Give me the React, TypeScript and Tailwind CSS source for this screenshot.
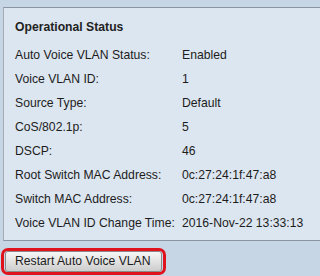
import React from 'react';

const rows: [string, string][] = [
  ['Auto Voice VLAN Status:', 'Enabled'],
  ['Voice VLAN ID:', '1'],
  ['Source Type:', 'Default'],
  ['CoS/802.1p:', '5'],
  ['DSCP:', '46'],
  ['Root Switch MAC Address:', '0c:27:24:1f:47:a8'],
  ['Switch MAC Address:', '0c:27:24:1f:47:a8'],
  ['Voice VLAN ID Change Time:', '2016-Nov-22 13:33:13'],
];

const App = () => {
  return (
    <div className="w-[320px] h-[276px] overflow-hidden bg-[#c7d6e5] pt-[7px] text-[12.2px] text-[#1c1c1c] font-['Liberation_Sans',Arial,sans-serif]">
      {/* Operational Status panel */}
      <div className="ml-[3px] border-t border-l border-b border-t-[#8a95a1] border-l-[#a3adb8] border-b-[#8a95a1] bg-[#dce6f0] pl-[11px] pt-[7px] pb-[5px]">
        <div className="h-[24px] leading-[24px] font-bold text-[#222]">Operational Status</div>
        <div className="mt-[4px] grid grid-cols-[167px_1fr]">
          {rows.map(([label, value], index) => (
            <React.Fragment key={index}>
              <div className="h-[24px] leading-[24px] whitespace-nowrap">{label}</div>
              <div className="h-[24px] leading-[24px] whitespace-nowrap">{value}</div>
            </React.Fragment>
          ))}
        </div>
      </div>

      {/* Restart button, outlined in red */}
      <div className="mt-[7px] ml-[1px] w-[165px] h-[27px] border-[3px] border-[#e0121c] rounded-[7px] flex items-center justify-center">
        <button className="w-[157px] h-[21px] border border-[#8a8a8a] rounded-[3px] bg-gradient-to-b from-[#f7f7f7] to-[#cdcdcd] text-[12.2px] leading-[19px] text-[#1c1c1c] text-left pl-[9px]">
          Restart Auto Voice VLAN
        </button>
      </div>
    </div>
  );
};

export default App;
